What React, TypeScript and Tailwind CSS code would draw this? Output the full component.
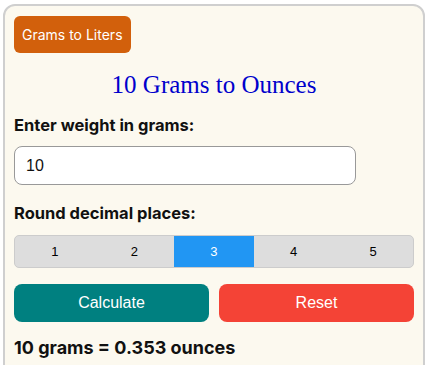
import { useState } from 'react';

const places = [1, 2, 3, 4, 5];

export default function App() {
  const [grams, setGrams] = useState('10');
  const [decimals, setDecimals] = useState(3);

  const ounces = (parseFloat(grams) || 0) / 28.349523125;

  return (
    <div className="bg-white min-h-screen pt-[4px] pl-[3px]">
      <div className="w-[422px] h-[400px] border-2 border-[#cfcfcf] rounded-[12px] bg-[#fcf9ef] px-[9px] pt-[10px] font-['Inter',sans-serif] text-[#111]">
        <button className="h-[37px] px-2 rounded-[6px] bg-[#d2600c] text-white text-[14px] font-['Inter',sans-serif]">
          Grams to Liters
        </button>

        <h1 className="mt-[16px] text-center text-[25px] leading-[32px] text-[#0000cc] font-['Liberation_Serif',serif]">
          {grams || 0} Grams to Ounces
        </h1>

        <label className="block mt-[12px] text-[16.5px] leading-[24px] font-bold">
          Enter weight in grams:
        </label>
        <input
          value={grams}
          onChange={(e) => setGrams(e.target.value)}
          className="mt-[9px] w-[342px] h-[39px] px-[11px] rounded-[8px] border border-[#999] bg-white text-[16px] font-['Liberation_Sans',sans-serif] outline-none"
        />

        <label className="block mt-[16px] text-[16.5px] leading-[24px] font-bold">
          Round decimal places:
        </label>
        <div className="mt-[10px] flex h-[33px] rounded-[5px] border border-[#cccccc] bg-[#dddddd] overflow-hidden">
          {places.map((p) => (
            <button
              key={p}
              onClick={() => setDecimals(p)}
              className={
                p === decimals
                  ? 'flex-1 bg-[#2196f3] text-white text-[13px] font-["Liberation_Sans",sans-serif]'
                  : 'flex-1 text-black text-[13px] font-["Liberation_Sans",sans-serif]'
              }
            >
              {p}
            </button>
          ))}
        </div>

        <div className="mt-[16px] flex gap-[10px]">
          <button className="flex-1 h-[38px] rounded-[8px] bg-[#008080] text-white text-[16px] font-['Liberation_Sans',sans-serif]">
            Calculate
          </button>
          <button
            onClick={() => setGrams('')}
            className="flex-1 h-[38px] rounded-[8px] bg-[#f44336] text-white text-[16px] font-['Liberation_Sans',sans-serif]"
          >
            Reset
          </button>
        </div>

        <p className="mt-[12px] text-[18px] leading-[27px] font-bold">
          {grams || 0} grams = {ounces.toFixed(decimals)} ounces
        </p>
      </div>
    </div>
  );
}
